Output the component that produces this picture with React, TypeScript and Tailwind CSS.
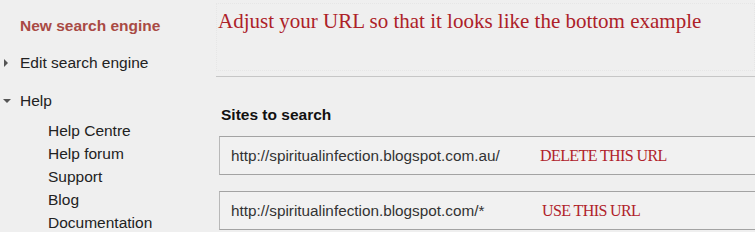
export default function App() {
  const helpLinks = ["Help Centre", "Help forum", "Support", "Blog", "Documentation"];

  return (
    <div className="w-[755px] h-[232px] overflow-hidden bg-[#efefef] flex font-['Liberation_Sans',Arial,sans-serif] text-[#222]">
      {/* Sidebar */}
      <aside className="w-[216px] shrink-0 pt-[14px] text-[15.5px] leading-[23px]">
        <div className="pl-[20px] font-bold text-[#a94a44]">New search engine</div>

        <div className="mt-[14px] flex items-center">
          <span className="w-[20px] flex justify-start pl-[4px]">
            <span className="w-0 h-0 border-y-[4px] border-y-transparent border-l-[4px] border-l-[#555]" />
          </span>
          <span>Edit search engine</span>
        </div>

        <div className="mt-[15px] flex items-center">
          <span className="w-[20px] flex justify-start pl-[3px]">
            <span className="w-0 h-0 border-x-[4px] border-x-transparent border-t-[4px] border-t-[#555]" />
          </span>
          <span>Help</span>
        </div>

        <ul className="mt-[7px] pl-[48px]">
          {helpLinks.map((l) => (
            <li key={l}>{l}</li>
          ))}
        </ul>
      </aside>

      {/* Main */}
      <main className="flex-1 min-w-0">
        <div className="mt-[3px] h-[68px] border border-dotted border-[#e6e6e6] pt-[5px] pl-[1px]">
          <h1 className="font-['Liberation_Serif','Times_New_Roman',serif] text-[21px] leading-[25px] text-[#ad2128] font-normal">
            Adjust your URL so that it looks like the bottom example
          </h1>
        </div>
        <div className="mt-[5px] border-t border-[#c6c6c6]" />

        <div className="pl-[5px] pt-[28px]">
          <h2 className="text-[15.5px] leading-[20px] font-bold text-[#111]">Sites to search</h2>

          <div className="mt-[11px] ml-[-2px] w-[560px] h-[39px] border border-[#a3a3a3] border-l-[#b8b8b8] bg-[#f1f1f1] flex items-center pl-[11px] text-[15.3px] leading-[20px]">
            <span className="w-[309px] shrink-0 text-[#333]">http://spiritualinfection.blogspot.com.au/</span>
            <span className="font-['Liberation_Serif','Times_New_Roman',serif] text-[16px] tracking-[-0.6px] text-[#b0222a]">
              DELETE THIS URL
            </span>
          </div>

          <div className="mt-[16px] ml-[-2px] w-[560px] h-[39px] border border-[#a3a3a3] border-l-[#b8b8b8] bg-[#f1f1f1] flex items-center pl-[11px] text-[15.3px] leading-[20px]">
            <span className="w-[311px] shrink-0 text-[#333]">http://spiritualinfection.blogspot.com/*</span>
            <span className="font-['Liberation_Serif','Times_New_Roman',serif] text-[16px] tracking-[-0.6px] text-[#b0222a]">
              USE THIS URL
            </span>
          </div>
        </div>
      </main>
    </div>
  );
}
